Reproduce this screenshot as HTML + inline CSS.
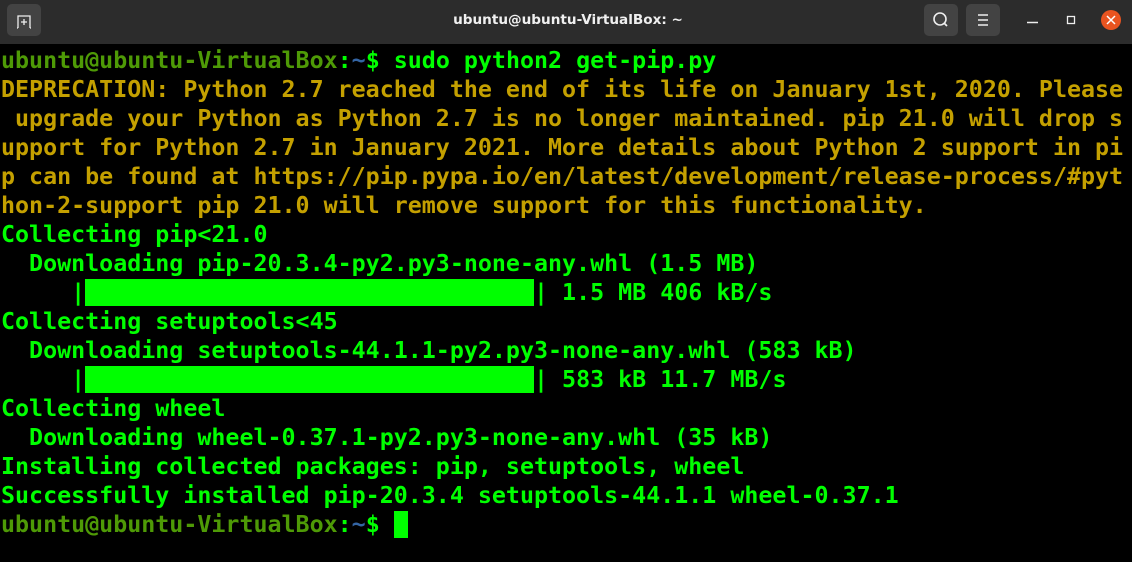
<!DOCTYPE html>
<html><head><meta charset="utf-8"><style>
html,body{margin:0;padding:0;width:1132px;height:562px;background:#000;overflow:hidden}
.bar{position:absolute;left:0;top:0;width:1132px;height:44px;background:#2c2c2c}
.btn{position:absolute;top:4px;width:34px;height:32px;background:#434343;border-radius:5px}
.title{position:absolute;left:2px;width:1132px;top:12px;text-align:center;color:#f0f0f0;font:bold 13.6px "DejaVu Sans","Liberation Sans",sans-serif}
.term{position:absolute;left:1px;top:46px;font-family:"DejaVu Sans Mono","Liberation Mono",monospace;font-weight:bold;font-size:23.3px;line-height:29px;white-space:pre;color:#00ff00}
.g{color:#4e9a06}.b{color:#3465a4}.y{color:#c4a000}
.blk{background:#00ff00}
.cur{display:inline-block;width:14px;height:27px;background:#00ff00;vertical-align:-6px}
</style></head><body>
<div class="bar">
 <div class="btn" style="left:7px"><svg width="34" height="32"><path d="M11 24V12h12v12M11 24h-1M23 24h1M17 15v6M14 18h6" stroke="#eee" stroke-width="1.3" fill="none"/></svg></div>
 <div class="title">ubuntu@ubuntu-VirtualBox: ~</div>
 <div class="btn" style="left:924px"><svg width="34" height="32"><circle cx="16" cy="15" r="6" stroke="#eee" stroke-width="1.6" fill="none"/><path d="M20 19l3 3" stroke="#eee" stroke-width="1.8"/></svg></div>
 <div class="btn" style="left:966px"><svg width="34" height="32"><path d="M12 11h10M12 16h10M12 21h10" stroke="#eee" stroke-width="1.4"/></svg></div>
 <svg style="position:absolute;left:1020px;top:0" width="112" height="44"><path d="M7 22.5h11" stroke="#eee" stroke-width="1.5"/><rect x="47.5" y="16.5" width="7" height="7" stroke="#eee" stroke-width="1.3" fill="none"/><circle cx="91" cy="20" r="10" fill="#e95420"/><path d="M87 16l8 8M95 16l-8 8" stroke="#fff" stroke-width="1.5"/></svg>
</div>
<div class="term"><span class="g">ubuntu@ubuntu-VirtualBox</span>:<span class="b">~</span>$ sudo python2 get-pip.py
<span class="y">DEPRECATION: Python 2.7 reached the end of its life on January 1st, 2020. Please
 upgrade your Python as Python 2.7 is no longer maintained. pip 21.0 will drop s
upport for Python 2.7 in January 2021. More details about Python 2 support in pi
p can be found at https://pip.pypa.io/en/latest/development/release-process/#pyt
hon-2-support pip 21.0 will remove support for this functionality.</span>
Collecting pip&lt;21.0
  Downloading pip-20.3.4-py2.py3-none-any.whl (1.5 MB)
     |<span class="blk">                                </span>| 1.5 MB 406 kB/s
Collecting setuptools&lt;45
  Downloading setuptools-44.1.1-py2.py3-none-any.whl (583 kB)
     |<span class="blk">                                </span>| 583 kB 11.7 MB/s
Collecting wheel
  Downloading wheel-0.37.1-py2.py3-none-any.whl (35 kB)
Installing collected packages: pip, setuptools, wheel
Successfully installed pip-20.3.4 setuptools-44.1.1 wheel-0.37.1
<span class="g">ubuntu@ubuntu-VirtualBox</span>:<span class="b">~</span>$ <span class="cur"></span></div>
</body></html>
